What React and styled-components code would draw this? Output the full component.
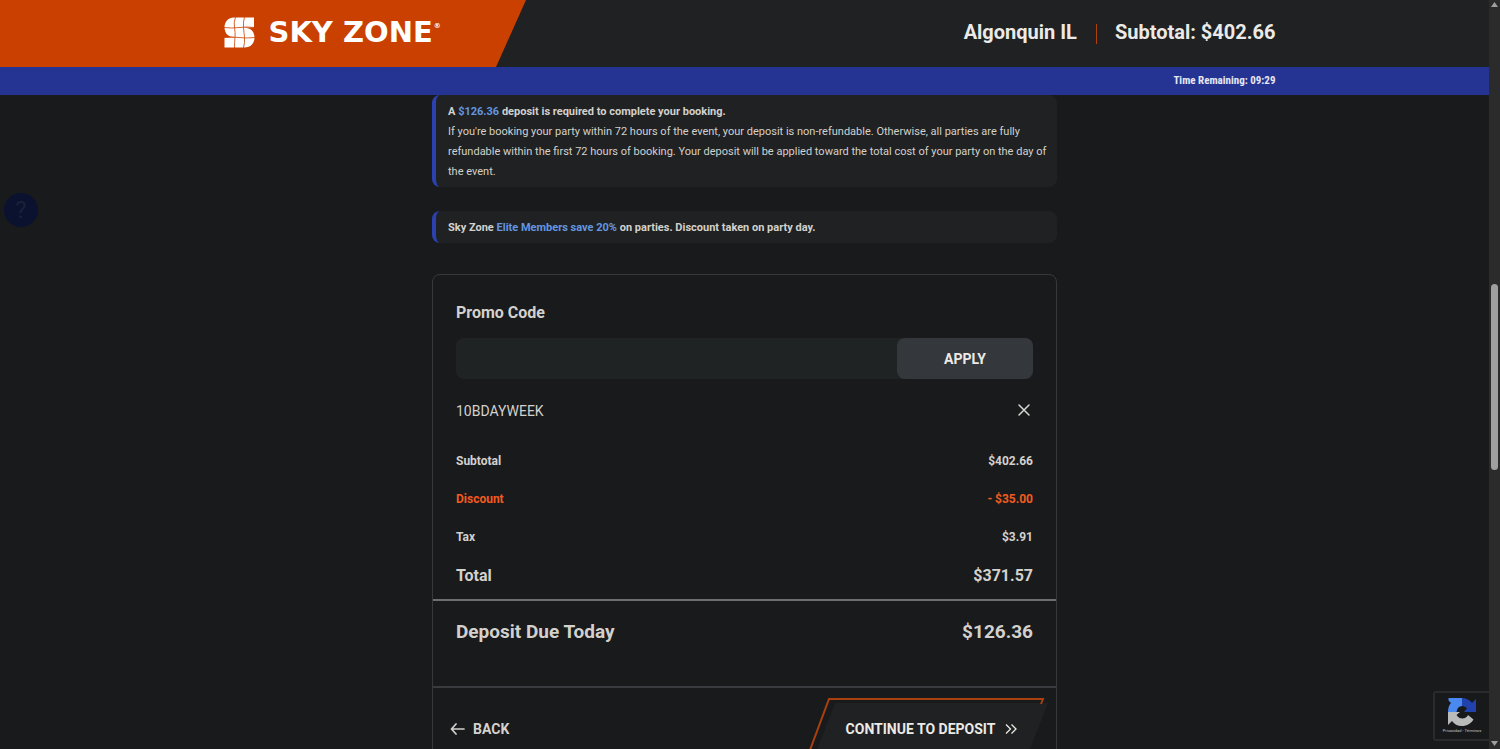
import React from 'react';
import styled, { createGlobalStyle } from 'styled-components';

const GlobalStyle = createGlobalStyle`
  * {
    box-sizing: border-box;
  }

  body {
    margin: 0;
    background-color: #191a1c;
    color: #d3d1cd;
    font-family: Roboto, 'Liberation Sans', sans-serif;
  }

  button {
    font-family: inherit;
    cursor: pointer;
  }
`;

const Window = styled.div`
  display: flex;
  height: 100vh;
  overflow: hidden;
`;

const Page = styled.div`
  flex: 1;
  min-width: 0;
  overflow: hidden;
`;

const Header = styled.header`
  position: relative;
  height: 67px;
  background-color: #1f2122;
`;

const HeaderShape = styled.svg`
  position: absolute;
  top: 0;
  left: 0;
`;

const Container = styled.div`
  display: flex;
  align-items: center;
  justify-content: space-between;
  position: relative;
  max-width: 1062px;
  height: 100%;
  margin: 0 auto;
  padding-left: 10px;
`;

const Logo = styled.a`
  display: flex;
  align-items: center;
  gap: 14px;
  margin-bottom: 3px;
  color: white;
  font-family: 'DejaVu Sans', sans-serif;
  font-size: 29px;
  font-weight: 700;
  line-height: 32px;
  text-decoration: none;
`;

const Registered = styled.sup`
  align-self: flex-start;
  margin-left: -13px;
  font-size: 7px;
  line-height: 20px;
`;

const HeaderInfo = styled.div`
  display: flex;
  align-items: center;
  margin-bottom: 3px;
  color: #eceae6;
  font-size: 20px;
  font-weight: 700;
  line-height: 24px;
`;

const Divider = styled.span`
  width: 1px;
  height: 20px;
  margin: 4px 18px 0 19px;
  background-color: #b0400c;
`;

const TimerBar = styled.div`
  height: 28px;
  background-color: #253393;
`;

const Timer = styled.span`
  margin-left: auto;
  padding-bottom: 2px;
  color: #e6e8f3;
  font-family: 'Liberation Sans Narrow', 'Roboto Condensed', Roboto, sans-serif;
  font-size: 11px;
  font-weight: 700;
`;

const Main = styled.main`
  max-width: 625px;
  margin: 0 auto;
`;

const Notice = styled.p`
  margin: 0 0 24px;
  padding: 7px 8px 5px 12px;
  border-left: 4px solid #2c41b0;
  border-radius: 8px;
  background-color: #1f2122;
  font-size: 11px;
  line-height: 20px;
`;

const Highlight = styled.span`
  color: #6496e0;
`;

const Card = styled.section`
  margin-top: 31px;
  border: 1px solid #36383b;
  border-radius: 8px;
`;

const CardBody = styled.div`
  padding: 26px 23px 5px;
`;

const PromoLabel = styled.label`
  display: block;
  margin-bottom: 13px;
  font-size: 16px;
  font-weight: 700;
  line-height: 24px;
`;

const PromoForm = styled.form`
  display: flex;
  height: 41px;
  border-radius: 8px;
  background-color: #202324;
`;

const PromoInput = styled.input`
  flex: 1;
  min-width: 0;
  padding: 0 12px;
  border: 0;
  background: none;
  color: inherit;
  font-size: 14px;
`;

const ApplyButton = styled.button`
  width: 136px;
  border: 0;
  border-radius: 8px;
  background-color: #34373c;
  color: #eceae6;
  font-size: 14px;
  font-weight: 700;
`;

const PromoCode = styled.div`
  display: flex;
  align-items: center;
  justify-content: space-between;
  height: 24px;
  margin: 20px 0 19px;
  font-size: 14px;
`;

const IconButton = styled.button`
  display: flex;
  padding: 3px 3px 5px;
  border: 0;
  background: none;
  color: #d8d6d2;
`;

const Row = styled.div`
  display: flex;
  align-items: center;
  justify-content: space-between;
  height: 38px;
  color: ${(props) => (props.$discount ? '#f25a1f' : 'inherit')};
  font-size: ${(props) => (props.$total ? 16 : 12)}px;
  font-weight: 700;
`;

const DepositRow = styled(Row)`
  height: 87px;
  padding: 0 23px 24px;
  border-top: 2px solid #6c6e70;
  font-size: 19px;
`;

const CardFooter = styled.div`
  display: flex;
  align-items: center;
  justify-content: space-between;
  padding: 10px 8px 16px 17px;
  border-top: 2px solid #393b3e;
`;

const BackButton = styled.button`
  display: flex;
  align-items: center;
  gap: 8px;
  padding: 0;
  border: 0;
  background: none;
  color: #d3d1cd;
  font-size: 14px;
  font-weight: 700;
`;

const ContinueButton = styled.button`
  display: flex;
  align-items: center;
  justify-content: center;
  gap: 10px;
  position: relative;
  width: 243px;
  height: 62px;
  padding: 0 0 0 10px;
  border: 0;
  background: none;
  color: #eceae6;
  font-size: 14px;
  font-weight: 700;
`;

const ButtonShape = styled.svg`
  position: absolute;
  top: 0;
  left: 0;
  z-index: -1;
`;

const HelpButton = styled.button`
  position: fixed;
  top: 193px;
  left: 4px;
  width: 34px;
  height: 34px;
  padding: 0;
  border: 0;
  border-radius: 50%;
  background-color: #0a1230;
  color: #1b2237;
  font-size: 24px;
  line-height: 34px;
`;

const Recaptcha = styled.aside`
  display: flex;
  flex-direction: column;
  align-items: center;
  position: fixed;
  right: 11px;
  bottom: 8px;
  width: 56px;
  height: 50px;
  padding-top: 4px;
  border: 2px solid #292b2d;
  border-right: 0;
  border-radius: 3px 0 0 3px;
  background-color: #17191b;
  color: #c4c4c4;
  font-size: 4px;
  line-height: 8px;
  white-space: nowrap;
`;

const Scrollbar = styled.div`
  display: flex;
  flex-direction: column;
  align-items: center;
  width: 11px;
  padding: 2px 0 3px;
  background-color: #2b2b2b;
`;

const Thumb = styled.div`
  width: 7px;
  height: 25%;
  margin: 37vh 0 auto;
  border-radius: 4px;
  background-color: #9f9f9f;
`;

const rows = [
  { label: 'Subtotal', value: '$402.66' },
  { label: 'Discount', value: '- $35.00', discount: true },
  { label: 'Tax', value: '$3.91' },
  { label: 'Total', value: '$371.57', total: true },
];

const LogoMark = () => (
  <svg width="31" height="31" viewBox="0 0 31 31" aria-hidden="true">
    <path
      fill="#fff"
      d="M10 .5H30V10.500H20.500V11H22C27 11 30.500 15 30.500 20.500C30.500 26.500 26.500 30.500 20.500 30.500H.5V20.500H10.500V20H9C4 20 .5 15.500 .5 10.500C.5 4.500 4.500 .5 10 .5Z"
    />
    <path
      fill="none"
      stroke="#c94000"
      strokeWidth="0.8"
      d="M11.500 0Q9.500 5 10.500 10.500T11 20.500T10.500 31M20.500 0Q19 5 19.500 10.500T20.500 20.500T19.500 31M0 10.500Q8 11.500 15 10.500T31 10.500M0 20.500Q8 19.500 15 20.500T31 20.500"
    />
  </svg>
);

const App = () => (
  <Window>
    <GlobalStyle />
    <Page>
      <Header>
        <HeaderShape width="526" height="67" aria-hidden="true">
          <path d="M0 0H526L496 67H0Z" fill="#c94000" />
        </HeaderShape>
        <Container>
          <Logo href="#home">
            <LogoMark />
            <span>SKY ZONE</span>
            <Registered>®</Registered>
          </Logo>
          <HeaderInfo>
            <span>Algonquin IL</span>
            <Divider />
            <span>Subtotal: $402.66</span>
          </HeaderInfo>
        </Container>
      </Header>
      <TimerBar>
        <Container>
          <Timer>Time Remaining: 09:29</Timer>
        </Container>
      </TimerBar>
      <Main>
        <Notice>
          <strong>
            A <Highlight>$126.36</Highlight> deposit is required to complete
            your booking.
          </strong>
          <br />
          If you're booking your party within 72 hours of the event, your
          deposit is non-refundable. Otherwise, all parties are fully refundable
          within the first 72 hours of booking. Your deposit will be applied
          toward the total cost of your party on the day of the event.
        </Notice>
        <Notice>
          <strong>
            Sky Zone <Highlight>Elite Members save 20%</Highlight> on parties.
            Discount taken on party day.
          </strong>
        </Notice>
        <Card>
          <CardBody>
            <PromoLabel htmlFor="promo">Promo Code</PromoLabel>
            <PromoForm onSubmit={(e) => e.preventDefault()}>
              <PromoInput id="promo" type="text" />
              <ApplyButton type="submit">APPLY</ApplyButton>
            </PromoForm>
            <PromoCode>
              <span>10BDAYWEEK</span>
              <IconButton type="button" aria-label="Remove promo code">
                <svg width="12" height="12" viewBox="0 0 12 12">
                  <path
                    d="M1 1L11 11M11 1L1 11"
                    stroke="currentColor"
                    strokeWidth="1.5"
                    strokeLinecap="round"
                  />
                </svg>
              </IconButton>
            </PromoCode>
            {rows.map((row) => (
              <Row key={row.label} $discount={row.discount} $total={row.total}>
                <span>{row.label}</span>
                <span>{row.value}</span>
              </Row>
            ))}
          </CardBody>
          <DepositRow>
            <span>Deposit Due Today</span>
            <span>$126.36</span>
          </DepositRow>
          <CardFooter>
            <BackButton type="button">
              <svg width="15" height="12" viewBox="0 0 15 12" fill="none">
                <path
                  d="M6 1L1.500 6L6 11M1.500 6H14"
                  stroke="currentColor"
                  strokeWidth="1.7"
                  strokeLinecap="round"
                  strokeLinejoin="round"
                />
              </svg>
              BACK
            </BackButton>
            <ContinueButton type="button">
              <ButtonShape width="243" height="62" aria-hidden="true">
                <path d="M30 5H243L221 62H8Z" fill="#1f2122" />
                <path
                  d="M5 52L24 1H238L236 6"
                  fill="none"
                  stroke="#a8410f"
                  strokeWidth="2"
                />
              </ButtonShape>
              CONTINUE TO DEPOSIT
              <svg width="12" height="12" viewBox="0 0 12 12" fill="none">
                <path
                  d="M1 1.500L5.500 6L1 10.500M6.500 1.500L11 6L6.500 10.500"
                  stroke="currentColor"
                  strokeWidth="1.3"
                />
              </svg>
            </ContinueButton>
          </CardFooter>
        </Card>
      </Main>
    </Page>
    <Scrollbar aria-hidden="true">
      <svg width="7" height="5">
        <path d="M3.500 0L7 5H0Z" fill="#9f9f9f" />
      </svg>
      <Thumb />
      <svg width="7" height="5">
        <path d="M0 0H7L3.500 5Z" fill="#9f9f9f" />
      </svg>
    </Scrollbar>
    <HelpButton type="button" aria-label="Help">
      ?
    </HelpButton>
    <Recaptcha>
      <svg width="30" height="30" viewBox="0 0 30 30" aria-hidden="true">
        <path
          d="M15 1V9C12 9 10 11 9.500 15H1C1 11 2 8 4 6L1.500 3.500V1Z"
          fill="#4a8af0"
        />
        <path
          d="M15 1C19 1 23 3 25 6L29 2V15H17L20 11.500C19 10 17 9 15 9Z"
          fill="#2142ad"
        />
        <path
          d="M1 15H13L9.500 18C11 20.500 13 21.500 15.500 21.500C18 21.500 20 20 21 18L26.500 22.500C24 26.500 20 29 15 29C10.500 29 7 27 5 24L1 28Z"
          fill="#b9bbbb"
        />
      </svg>
      <span>Privacidad - Términos</span>
    </Recaptcha>
  </Window>
);

export default App;
